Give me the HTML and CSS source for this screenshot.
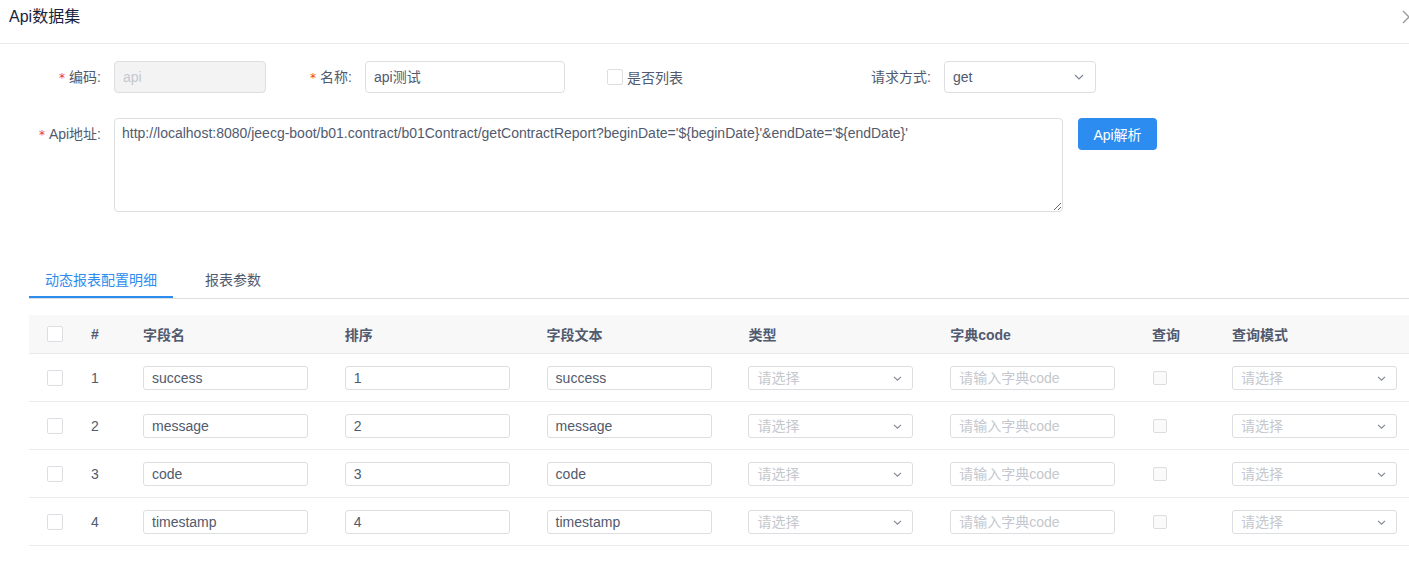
FILE: index.html
```html
<!DOCTYPE html>
<html lang="zh-CN">
<head>
<meta charset="utf-8">
<title>Api数据集</title>
<link rel="stylesheet" href="styles.css">
</head>
<body>
<div class="modal">
  <div class="modal-header">
    <span class="modal-title">Api数据集</span>
    <span class="modal-close"><svg width="14" height="14" viewBox="0 0 14 14"><path d="M1 1L13 13M13 1L1 13" stroke="#999" stroke-width="1.3" fill="none"/></svg></span>
  </div>

  <div class="form">
    <div class="form-row">
      <div class="fi fi-code">
        <label class="fi-label"><span class="req">*</span>编码:</label>
        <div class="input disabled">api</div>
      </div>
      <div class="fi fi-name">
        <label class="fi-label"><span class="req">*</span>名称:</label>
        <div class="input">api测试</div>
      </div>
      <div class="fi fi-list">
        <span class="checkbox"></span><span class="cb-text">是否列表</span>
      </div>
      <div class="fi fi-method">
        <label class="fi-label">请求方式:</label>
        <div class="input select">get<svg class="arrow" width="10" height="6" viewBox="0 0 10 6"><path d="M1 1L5 5L9 1" stroke="#808695" stroke-width="1.2" fill="none"/></svg></div>
      </div>
    </div>
    <div class="form-row row-api">
      <label class="fi-label lbl-api"><span class="req">*</span>Api地址:</label>
      <textarea class="textarea" readonly>http://localhost:8080/jeecg-boot/b01.contract/b01Contract/getContractReport?beginDate='${beginDate}'&amp;endDate='${endDate}'</textarea>
      <button class="btn-primary">Api解析</button>
    </div>
  </div>

  <div class="tabs">
    <div class="tab active">动态报表配置明细</div>
    <div class="tab">报表参数</div>
  </div>

  <div class="table-wrap">
    <div class="table">
      <div class="tr thead">
        <div class="td c-check"><span class="checkbox"></span></div>
        <div class="td">#</div>
        <div class="td">字段名</div>
        <div class="td">排序</div>
        <div class="td">字段文本</div>
        <div class="td">类型</div>
        <div class="td">字典code</div>
        <div class="td">查询</div>
        <div class="td">查询模式</div>
      </div>

      <div class="tr">
        <div class="td c-check"><span class="checkbox"></span></div>
        <div class="td">1</div>
        <div class="td"><div class="cell-input">success</div></div>
        <div class="td"><div class="cell-input">1</div></div>
        <div class="td"><div class="cell-input">success</div></div>
        <div class="td"><div class="cell-input ph">请选择<svg class="arrow" width="9" height="5" viewBox="0 0 9 5"><path d="M1 0.8L4.5 4.2L8 0.8" stroke="#808695" stroke-width="1.1" fill="none"/></svg></div></div>
        <div class="td"><div class="cell-input ph">请输入字典code</div></div>
        <div class="td"><span class="checkbox small"></span></div>
        <div class="td"><div class="cell-input ph">请选择<svg class="arrow" width="9" height="5" viewBox="0 0 9 5"><path d="M1 0.8L4.5 4.2L8 0.8" stroke="#808695" stroke-width="1.1" fill="none"/></svg></div></div>
      </div>

      <div class="tr">
        <div class="td c-check"><span class="checkbox"></span></div>
        <div class="td">2</div>
        <div class="td"><div class="cell-input">message</div></div>
        <div class="td"><div class="cell-input">2</div></div>
        <div class="td"><div class="cell-input">message</div></div>
        <div class="td"><div class="cell-input ph">请选择<svg class="arrow" width="9" height="5" viewBox="0 0 9 5"><path d="M1 0.8L4.5 4.2L8 0.8" stroke="#808695" stroke-width="1.1" fill="none"/></svg></div></div>
        <div class="td"><div class="cell-input ph">请输入字典code</div></div>
        <div class="td"><span class="checkbox small"></span></div>
        <div class="td"><div class="cell-input ph">请选择<svg class="arrow" width="9" height="5" viewBox="0 0 9 5"><path d="M1 0.8L4.5 4.2L8 0.8" stroke="#808695" stroke-width="1.1" fill="none"/></svg></div></div>
      </div>

      <div class="tr">
        <div class="td c-check"><span class="checkbox"></span></div>
        <div class="td">3</div>
        <div class="td"><div class="cell-input">code</div></div>
        <div class="td"><div class="cell-input">3</div></div>
        <div class="td"><div class="cell-input">code</div></div>
        <div class="td"><div class="cell-input ph">请选择<svg class="arrow" width="9" height="5" viewBox="0 0 9 5"><path d="M1 0.8L4.5 4.2L8 0.8" stroke="#808695" stroke-width="1.1" fill="none"/></svg></div></div>
        <div class="td"><div class="cell-input ph">请输入字典code</div></div>
        <div class="td"><span class="checkbox small"></span></div>
        <div class="td"><div class="cell-input ph">请选择<svg class="arrow" width="9" height="5" viewBox="0 0 9 5"><path d="M1 0.8L4.5 4.2L8 0.8" stroke="#808695" stroke-width="1.1" fill="none"/></svg></div></div>
      </div>

      <div class="tr">
        <div class="td c-check"><span class="checkbox"></span></div>
        <div class="td">4</div>
        <div class="td"><div class="cell-input">timestamp</div></div>
        <div class="td"><div class="cell-input">4</div></div>
        <div class="td"><div class="cell-input">timestamp</div></div>
        <div class="td"><div class="cell-input ph">请选择<svg class="arrow" width="9" height="5" viewBox="0 0 9 5"><path d="M1 0.8L4.5 4.2L8 0.8" stroke="#808695" stroke-width="1.1" fill="none"/></svg></div></div>
        <div class="td"><div class="cell-input ph">请输入字典code</div></div>
        <div class="td"><span class="checkbox small"></span></div>
        <div class="td"><div class="cell-input ph">请选择<svg class="arrow" width="9" height="5" viewBox="0 0 9 5"><path d="M1 0.8L4.5 4.2L8 0.8" stroke="#808695" stroke-width="1.1" fill="none"/></svg></div></div>
      </div>
    </div>
  </div>
</div>
</body>
</html>
```

FILE: styles.css
```css
* { box-sizing: border-box; }

html, body {
  margin: 0;
  padding: 0;
  background: #fff;
}

body {
  width: 1409px;
  height: 572px;
  overflow: hidden;
  font-family: "Liberation Sans", "Noto Sans CJK SC", sans-serif;
  font-size: 14px;
  color: #515a6e;
}

.modal {
  position: relative;
  width: 1409px;
}

.modal-header {
  height: 44px;
  border-bottom: 1px solid #e8eaec;
  padding: 5px 0 0 9px;
}

.modal-title {
  display: block;
  font-size: 16px;
  line-height: 24px;
  color: #17233d;
}

.modal-close {
  position: absolute;
  right: -7px;
  top: 10px;
  width: 14px;
  height: 14px;
  display: block;
}
.modal-close svg { display: block; }

/* form */
.form {
  padding-top: 17px;
}

.form-row {
  display: flex;
  align-items: center;
  padding-left: 22px;
  height: 32px;
}

.fi {
  display: flex;
  align-items: center;
}

.fi-label {
  text-align: right;
  padding-right: 13px;
  line-height: 32px;
  color: #515a6e;
  white-space: nowrap;
}

.req {
  color: #ed4014;
  margin-right: 4px;
  font-family: "DejaVu Sans", sans-serif;
  font-size: 12px;
}

.fi-code .fi-label { width: 92px; }
.fi-name .fi-label { width: 99px; }
.fi-method .fi-label { width: 161px; }

.input {
  height: 32px;
  border: 1px solid #dcdee2;
  border-radius: 4px;
  padding: 0 8px;
  line-height: 30px;
  color: #515a6e;
  background: #fff;
  position: relative;
}

.fi-code .input { width: 152px; }
.fi-name .input { width: 200px; }
.fi-method .input { width: 152px; }

.input.disabled {
  background: #f3f3f3;
  color: #c5c8ce;
}

.fi-list {
  width: 218px;
  padding-left: 42px;
}

.checkbox {
  display: inline-block;
  width: 16px;
  height: 16px;
  border: 1px solid #dcdee2;
  border-radius: 2px;
  background: #fff;
  vertical-align: middle;
}

.checkbox.small {
  width: 14px;
  height: 14px;
  background: #fafafa;
}

.cb-text {
  margin-left: 4px;
}

.select .arrow {
  position: absolute;
  right: 11px;
  top: 12px;
}

.row-api {
  margin-top: 25px;
  height: auto;
  align-items: flex-start;
}

.lbl-api { width: 92px; }

.textarea {
  width: 949px;
  height: 94px;
  border: 1px solid #dcdee2;
  border-radius: 4px;
  padding: 4px 7px;
  font-family: "Liberation Sans", "Noto Sans CJK SC", sans-serif;
  font-size: 14px;
  line-height: 21px;
  color: #515a6e;
  margin: 0;
  outline: none;
  display: block;
}

.btn-primary {
  margin-left: 15px;
  width: 79px;
  height: 32px;
  border: 0;
  border-radius: 4px;
  background: #2d8cf0;
  color: #fff;
  font-family: "Liberation Sans", "Noto Sans CJK SC", sans-serif;
  font-size: 14px;
  padding: 0;
}

/* tabs */
.tabs {
  margin-top: 50px;
  margin-left: 29px;
  display: flex;
  border-bottom: 1px solid #dcdee2;
}

.tab {
  height: 36px;
  line-height: 36px;
  padding: 0 16px;
  margin-right: 16px;
  border-bottom: 2px solid transparent;
  color: #515a6e;
}

.tab.active {
  color: #2d8cf0;
  border-bottom-color: #2d8cf0;
}

/* table */
.table-wrap {
  margin-top: 16px;
  margin-left: 29px;
  width: 1380px;
  overflow: hidden;
}

.table {
  width: 1420px;
}

.tr {
  display: grid;
  grid-template-columns: 50px 52px repeat(5, 201.8px) 80px 229px;
  height: 48px;
  border-bottom: 1px solid #e8eaec;
  align-items: center;
}

.tr.thead {
  height: 39px;
  background: #f8f8f9;
  font-weight: bold;
}

.td {
  padding-left: 12px;
  display: flex;
  align-items: center;
  white-space: nowrap;
}

.td.c-check {
  padding-left: 18px;
}

.tr .td:nth-child(8) .checkbox { margin-left: 1px; }

.cell-input {
  position: relative;
  width: 165px;
  height: 24px;
  border: 1px solid #dcdee2;
  border-radius: 3px;
  padding: 0 8px;
  line-height: 22px;
  color: #515a6e;
  background: #fff;
}

.cell-input.ph {
  color: #c5c8ce;
}

.cell-input .arrow {
  position: absolute;
  right: 10px;
  top: 9px;
}
```
